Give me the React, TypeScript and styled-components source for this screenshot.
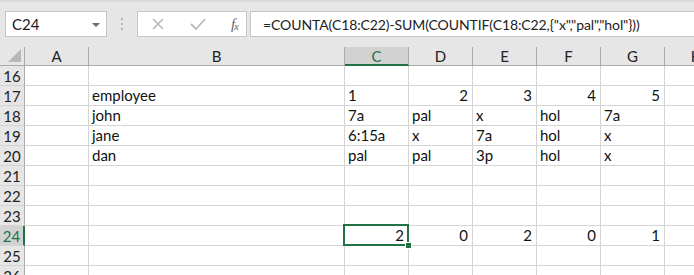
import React from "react";
import styled, { createGlobalStyle } from "styled-components";

const GlobalStyle = createGlobalStyle`
  html, body {
    margin: 0;
    padding: 0;
    background: #ffffff;
    overflow: hidden;
  }
  body {
    font-family: Lato, "Liberation Sans", sans-serif;
  }
`;

const GREEN = "#217346";

type Align = "left" | "right";
type CellValue = { text: string; align?: Align };

const columns = ["A", "B", "C", "D", "E", "F", "G", "H"];
const activeCol = "C";
const activeRow = 24;

const t = (text: string): CellValue => ({ text, align: "left" });
const n = (text: string, align: Align = "right"): CellValue => ({ text, align });

const data: Record<number, Partial<Record<string, CellValue>>> = {
  17: { B: t("employee"), C: n("1", "left"), D: n("2"), E: n("3"), F: n("4"), G: n("5") },
  18: { B: t("john"), C: t("7a"), D: t("pal"), E: t("x"), F: t("hol"), G: t("7a") },
  19: { B: t("jane"), C: t("6:15a"), D: t("x"), E: t("7a"), F: t("hol"), G: t("x") },
  20: { B: t("dan"), C: t("pal"), D: t("pal"), E: t("3p"), F: t("hol"), G: t("x") },
  24: { C: n("2"), D: n("0"), E: n("2"), F: n("0"), G: n("1") },
};

const rows = Array.from({ length: 11 }, (_, i) => 16 + i);

export default function App() {
  return (
    <>
      <GlobalStyle />
      <Window>
        <FormulaBar>
          <NameBox>
            <span>C24</span>
            <DropArrow />
          </NameBox>
          <Grip>
            <i />
            <i />
            <i />
          </Grip>
          <IconBox>
            <svg width="14" height="14" viewBox="0 0 14 14">
              <path d="M2 2 L12 12 M12 2 L2 12" stroke="#b9b9b9" strokeWidth="1.6" fill="none" />
            </svg>
            <svg width="18" height="14" viewBox="0 0 18 14">
              <path d="M2 7 L7 12 L16 2" stroke="#b9b9b9" strokeWidth="1.8" fill="none" />
            </svg>
            <Fx>
              f<sub>x</sub>
            </Fx>
          </IconBox>
          <FormulaInput>{'=COUNTA(C18:C22)-SUM(COUNTIF(C18:C22,{"x","pal","hol"}))'}</FormulaInput>
        </FormulaBar>

        <Sheet>
          <Corner>
            <svg width="13" height="13" viewBox="0 0 13 13">
              <polygon points="13,0 13,13 0,13" fill="#b7b7b7" />
            </svg>
          </Corner>
          {columns.map((c) => (
            <ColHeader key={c} $active={c === activeCol}>
              {c}
            </ColHeader>
          ))}
          {rows.map((r) => (
            <React.Fragment key={r}>
              <RowHeader $active={r === activeRow}>{r}</RowHeader>
              {columns.map((c) => {
                const v = data[r]?.[c];
                const selected = r === activeRow && c === activeCol;
                return (
                  <Cell key={c} $align={v?.align ?? "left"} $selected={selected}>
                    {v?.text}
                    {selected && <FillHandle />}
                  </Cell>
                );
              })}
            </React.Fragment>
          ))}
        </Sheet>
      </Window>
    </>
  );
}

const Window = styled.div`
  width: 694px;
  height: 275px;
  overflow: hidden;
  background: #e6e6e6;
`;

const FormulaBar = styled.div`
  height: 47px;
  box-sizing: border-box;
  padding: 9px 0 0 5px;
  display: flex;
  align-items: flex-start;
  border-top: 2px solid #dadada;
`;

const NameBox = styled.div`
  width: 102px;
  height: 26px;
  box-sizing: border-box;
  background: #fff;
  border: 1px solid #c6c6c6;
  display: flex;
  align-items: center;
  justify-content: space-between;
  padding: 0 6px;
  font-size: 15px;
  color: #222;
`;

const DropArrow = styled.span`
  width: 0;
  height: 0;
  border-left: 4px solid transparent;
  border-right: 4px solid transparent;
  border-top: 4px solid #6b6b6b;
  margin-top: 1px;
`;

const Grip = styled.div`
  width: 30px;
  height: 26px;
  display: flex;
  flex-direction: column;
  align-items: center;
  justify-content: center;
  gap: 3px;

  i {
    width: 2px;
    height: 2px;
    background: #b4b4b4;
    display: block;
  }
`;

const IconBox = styled.div`
  width: 110px;
  height: 26px;
  box-sizing: border-box;
  background: #fff;
  border: 1px solid #c6c6c6;
  display: flex;
  align-items: center;
  justify-content: space-between;
  padding: 0 8px 0 13px;
`;

const Fx = styled.span`
  font-family: "Liberation Serif", serif;
  font-style: italic;
  font-size: 15px;
  color: #666;
  letter-spacing: -1px;

  sub {
    font-size: 11px;
    vertical-align: -1px;
  }
`;

const FormulaInput = styled.div`
  flex: 1;
  height: 26px;
  margin-left: 3px;
  box-sizing: border-box;
  background: #fff;
  border: 1px solid #c6c6c6;
  border-right: none;
  display: flex;
  align-items: center;
  padding-left: 12px;
  font-size: 14px;
  letter-spacing: -0.1px;
  color: #222;
  white-space: nowrap;
`;

const Sheet = styled.div`
  display: grid;
  grid-template-columns: 25px 64px 256px 64px 64px 64px 64px 64px 64px;
  grid-template-rows: 19px;
  grid-auto-rows: 20px;
  background: #fff;
`;

const Corner = styled.div`
  background: #e6e6e6;
  border-right: 1px solid #ababab;
  border-bottom: 1px solid #ababab;
  display: flex;
  align-items: flex-end;
  justify-content: flex-end;
  padding: 0 3px 3px 0;
`;

const ColHeader = styled.div<{ $active: boolean }>`
  box-sizing: border-box;
  background: ${(p) => (p.$active ? "#d2d2d2" : "#e6e6e6")};
  color: ${(p) => (p.$active ? GREEN : "#222")};
  border-right: 1px solid #ababab;
  border-bottom: ${(p) => (p.$active ? `2px solid ${GREEN}` : "1px solid #ababab")};
  display: flex;
  align-items: center;
  justify-content: center;
  font-size: 15px;
  padding-top: ${(p) => (p.$active ? "1px" : "0")};
`;

const RowHeader = styled.div<{ $active: boolean }>`
  box-sizing: border-box;
  background: ${(p) => (p.$active ? "#d2d2d2" : "#e6e6e6")};
  color: ${(p) => (p.$active ? GREEN : "#222")};
  border-right: ${(p) => (p.$active ? `2px solid ${GREEN}` : "1px solid #ababab")};
  border-bottom: 1px solid #d4d4d4;
  display: flex;
  align-items: center;
  justify-content: center;
  font-size: 15px;
  padding-top: 1px;
`;

const Cell = styled.div<{ $align: Align; $selected: boolean }>`
  position: relative;
  box-sizing: border-box;
  border-right: 1px solid #d4d4d4;
  border-bottom: 1px solid #d4d4d4;
  display: flex;
  align-items: flex-end;
  justify-content: ${(p) => (p.$align === "right" ? "flex-end" : "flex-start")};
  padding: 0 4px 1px 3px;
  font-size: 15px;
  line-height: 18px;
  color: #111;
  white-space: nowrap;

  ${(p) =>
    p.$selected &&
    `
    &::after {
      content: "";
      position: absolute;
      left: -2px;
      top: -2px;
      right: -1px;
      bottom: -1px;
      border: 2px solid ${GREEN};
      pointer-events: none;
    }
  `}
`;

const FillHandle = styled.span`
  position: absolute;
  right: -4px;
  bottom: -4px;
  width: 5px;
  height: 5px;
  background: ${GREEN};
  border: 1px solid #fff;
  z-index: 1;
`;
